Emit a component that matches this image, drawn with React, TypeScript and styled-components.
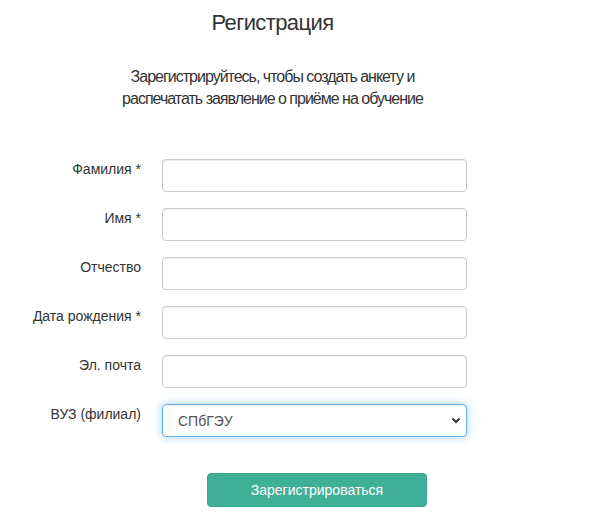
import styled, { createGlobalStyle } from 'styled-components';

const GlobalStyle = createGlobalStyle`
  body {
    margin: 0;
    background: #fff;
    font-family: "Liberation Sans", Arial, sans-serif;
    color: #333;
  }
`;

const Page = styled.div`
  width: 545px;
  padding-top: 10px;
`;

const Title = styled.h1`
  margin: 0;
  font-size: 22px;
  line-height: 26px;
  font-weight: 400;
  letter-spacing: -0.6px;
  text-align: center;
  color: #333;
`;

const Lead = styled.p`
  margin: 30px 0 0;
  font-size: 16px;
  line-height: 22px;
  letter-spacing: -1px;
  text-align: center;
  color: #333;
`;

const Form = styled.form`
  margin-top: 49px;
`;

const Row = styled.div`
  display: grid;
  grid-template-columns: 141px 305px;
  column-gap: 21px;
  margin-bottom: 16px;
`;

const Label = styled.label`
  padding-top: 0;
  font-size: 14px;
  line-height: 20px;
  text-align: right;
  color: #333;
`;

const Input = styled.input`
  box-sizing: border-box;
  width: 100%;
  height: 33px;
  padding: 6px 12px;
  border: 1px solid #ccc;
  border-radius: 4px;
  box-shadow: inset 0 1px 1px rgba(0, 0, 0, 0.075);
  font: inherit;
  font-size: 14px;
  color: #555;
  outline: none;
`;

const SelectWrap = styled.div`
  position: relative;
`;

const Select = styled.select`
  box-sizing: border-box;
  width: 100%;
  height: 33px;
  padding: 6px 12px 6px 15px;
  border: 1px solid #66afe9;
  border-radius: 4px;
  box-shadow: inset 0 1px 1px rgba(0, 0, 0, 0.075), 0 0 8px rgba(102, 175, 233, 0.6);
  background: #fff;
  font-family: "Liberation Sans", Arial, sans-serif;
  font-size: 14px;
  color: #555;
  appearance: none;
  outline: none;
`;

const Chevron = styled.svg`
  position: absolute;
  right: 6px;
  top: 13px;
  pointer-events: none;
`;

const Actions = styled.div`
  padding: 20px 0 0 207px;
`;

const Submit = styled.button`
  width: 220px;
  height: 34px;
  border: 1px solid #3aa68f;
  border-radius: 4px;
  background: #40af98;
  color: #fff;
  font-family: "Liberation Sans", Arial, sans-serif;
  font-size: 14px;
  cursor: pointer;
`;

const fields = ['Фамилия *', 'Имя *', 'Отчество', 'Дата рождения *', 'Эл. почта'];

export default function App() {
  return (
    <Page>
      <GlobalStyle />
      <Title>Регистрация</Title>
      <Lead>
        Зарегистрируйтесь, чтобы создать анкету и
        <br />
        распечатать заявление о приёме на обучение
      </Lead>
      <Form>
        {fields.map((f) => (
          <Row key={f}>
            <Label>{f}</Label>
            <Input type="text" />
          </Row>
        ))}
        <Row>
          <Label>ВУЗ (филиал)</Label>
          <SelectWrap>
            <Select defaultValue="spb">
              <option value="spb">СПбГЭУ</option>
            </Select>
            <Chevron width="10" height="7" viewBox="0 0 10 7">
              <path d="M1.5 1.5 L5 5 L8.5 1.5" fill="none" stroke="#333" strokeWidth="2" />
            </Chevron>
          </SelectWrap>
        </Row>
        <Actions>
          <Submit type="button">Зарегистрироваться</Submit>
        </Actions>
      </Form>
    </Page>
  );
}
